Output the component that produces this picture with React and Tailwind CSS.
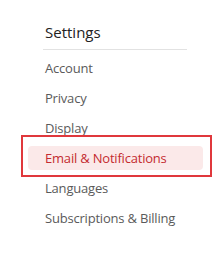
import React from 'react';

const items = ['Account', 'Privacy', 'Display', 'Email & Notifications', 'Languages', 'Subscriptions & Billing'];

export default function App() {
  const active = 'Email & Notifications';

  return (
    <div className="relative w-[216px] h-[259px] bg-white font-['Open_Sans',sans-serif]">
      <div className="pl-[28px] pt-[20px] w-[203px]">
        <div className="pl-[15px] pr-[16px]">
          <h2 className="h-[24px] pl-[2px] text-[15px] leading-[24px] font-medium text-[#222]">Settings</h2>
          <div className="mt-[5px] border-t border-[#e2e2e2]" />
        </div>
        <nav className="mt-[6px] flex flex-col gap-[6px]">
          {items.map((item) => (
            <div
              key={item}
              className={
                item === active
                  ? 'h-[24px] rounded-[4px] bg-[#fbe9e9] pl-[17px] text-[13px] leading-[24px] text-[#c42b30] tracking-[-0.2px]'
                  : 'h-[24px] pl-[17px] text-[13px] leading-[24px] text-[#5a5a5a] tracking-[-0.2px]'
              }
            >
              {item}
            </div>
          ))}
        </nav>
      </div>
      {/* annotation outline */}
      <div className="absolute left-[21px] top-[135px] w-[191px] h-[42px] border-2 border-[#e0383c]" />
    </div>
  );
}
